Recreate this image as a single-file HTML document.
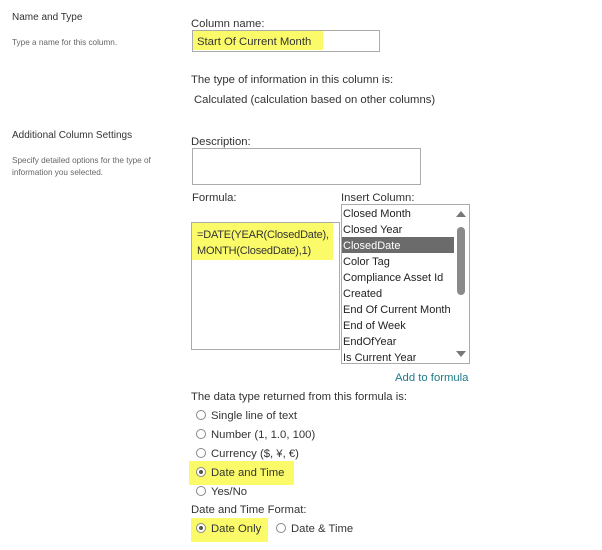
<!DOCTYPE html>
<html><head><meta charset="utf-8"><style>
body{margin:0;width:602px;height:550px;background:#fff;position:relative;overflow:hidden;font-family:"Liberation Sans",sans-serif;color:#333}
.a{position:absolute;white-space:nowrap;line-height:1}
.t{font-size:11.3px;color:#333;margin-top:2px}
.h{font-size:10px;color:#333;margin-top:1px}
.s{font-size:8.2px;color:#666;margin-top:1px}
.box{position:absolute;border:1px solid #ababab;background:#fff;box-sizing:border-box}
.y{position:absolute;background:#fbfb6a}
.r{position:absolute;width:10px;height:10px;border:1px solid #888;border-radius:50%;background:#fff;box-sizing:border-box;margin-top:1px}
.r.on::after{content:"";position:absolute;left:2px;top:2px;width:4px;height:4px;border-radius:50%;background:#555}
.li{position:absolute;left:343px;font-size:11px;color:#222;line-height:16px;margin-top:1px}
</style></head><body>
<div class="a h" style="left:12px;top:12px">Name and Type</div>
<div class="a s" style="left:12px;top:38px">Type a name for this column.</div>
<div class="a t" style="left:191px;top:17px">Column name:</div>
<div class="box" style="left:192px;top:30px;width:188px;height:22px"></div>
<div class="y" style="left:193px;top:31px;width:130px;height:19px"></div>
<div class="a t" style="left:197px;top:35px">Start Of Current Month</div>
<div class="a t" style="left:191px;top:73px">The type of information in this column is:</div>
<div class="a t" style="left:194px;top:93px">Calculated (calculation based on other columns)</div>
<div class="a h" style="left:12px;top:130px">Additional Column Settings</div>
<div class="a s" style="left:12px;top:156px">Specify detailed options for the type of</div>
<div class="a s" style="left:12px;top:168px">information you selected.</div>
<div class="a t" style="left:191px;top:135px">Description:</div>
<div class="box" style="left:192px;top:148px;width:229px;height:37px"></div>
<div class="a t" style="left:192px;top:191px">Formula:</div>
<div class="box" style="left:191px;top:222px;width:149px;height:128px"></div>
<div class="y" style="left:192px;top:223px;width:141px;height:37px"></div>
<div class="a t" style="left:197px;top:228px;font-size:11px;letter-spacing:-0.2px">=DATE(YEAR(ClosedDate),</div>
<div class="a t" style="left:197px;top:244px;font-size:11px;letter-spacing:-0.2px">MONTH(ClosedDate),1)</div>
<div class="a t" style="left:341px;top:191px">Insert Column:</div>
<div class="box" style="left:341px;top:204px;width:129px;height:160px"></div>
<div style="position:absolute;left:342px;top:237px;width:112px;height:16px;background:#6b6b6b"></div>
<div class="li" style="top:205px">Closed Month</div>
<div class="li" style="top:221px">Closed Year</div>
<div class="li" style="top:237px;color:#fff">ClosedDate</div>
<div class="li" style="top:253px">Color Tag</div>
<div class="li" style="top:269px">Compliance Asset Id</div>
<div class="li" style="top:285px">Created</div>
<div class="li" style="top:301px">End Of Current Month</div>
<div class="li" style="top:317px">End of Week</div>
<div class="li" style="top:333px">EndOfYear</div>
<div class="li" style="top:349px;height:14px;overflow:hidden">Is Current Year</div>
<div style="position:absolute;left:456px;top:211px;width:0;height:0;border-left:5px solid transparent;border-right:5px solid transparent;border-bottom:6px solid #777"></div>
<div style="position:absolute;left:457px;top:227px;width:8px;height:68px;border-radius:4px;background:#8a8a8a"></div>
<div style="position:absolute;left:456px;top:351px;width:0;height:0;border-left:5px solid transparent;border-right:5px solid transparent;border-top:6px solid #777"></div>
<div class="a t" style="left:395px;top:371px;color:#1e7a87">Add to formula</div>
<div class="a t" style="left:191px;top:390px">The data type returned from this formula is:</div>
<div class="y" style="left:189px;top:461px;width:105px;height:24px"></div>
<div class="r" style="left:196px;top:409px"></div><div class="a t" style="left:211px;top:409px">Single line of text</div>
<div class="r" style="left:196px;top:428px"></div><div class="a t" style="left:211px;top:428px">Number (1, 1.0, 100)</div>
<div class="r" style="left:196px;top:447px"></div><div class="a t" style="left:211px;top:447px">Currency ($, ¥, €)</div>
<div class="r on" style="left:196px;top:466px"></div><div class="a t" style="left:211px;top:466px">Date and Time</div>
<div class="r" style="left:196px;top:485px"></div><div class="a t" style="left:211px;top:485px">Yes/No</div>
<div class="a t" style="left:191px;top:503px">Date and Time Format:</div>
<div class="y" style="left:191px;top:518px;width:77px;height:24px"></div>
<div class="r on" style="left:196px;top:522px"></div><div class="a t" style="left:211px;top:522px">Date Only</div>
<div class="r" style="left:276px;top:522px"></div><div class="a t" style="left:291px;top:522px">Date &amp; Time</div>
</body></html>
